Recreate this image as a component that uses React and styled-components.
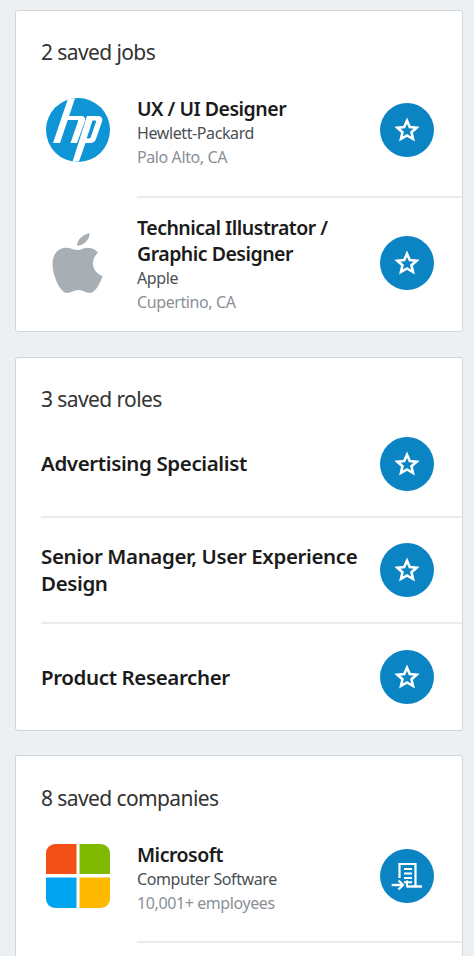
import styled, { createGlobalStyle } from "styled-components";

const GlobalStyle = createGlobalStyle`
  html, body {
    margin: 0;
    padding: 0;
    height: 956px;
    overflow: hidden;
    background: #edf0f3;
  }
  body {
    font-family: "Noto Sans", "Open Sans", sans-serif;
    -webkit-font-smoothing: antialiased;
  }
`;

const Page = styled.div`
  display: flex;
  flex-direction: column;
  height: 956px;
  box-sizing: border-box;
  padding: 10px 11px 0 15px;
`;

const Card = styled.section`
  background: #fff;
  border: 1px solid #d0d5d9;
  border-radius: 3px;
  box-sizing: border-box;
  padding-left: 25px;
  margin-bottom: ${(p) => p.$gap || 0}px;
`;

const OpenCard = styled(Card)`
  flex: 1;
  border-bottom: none;
  border-radius: 3px 3px 0 0;
`;

const Heading = styled.h2`
  margin: 0;
  height: ${(p) => p.$height}px;
  padding-top: ${(p) => p.$pad}px;
  box-sizing: border-box;
  font-size: 21px;
  line-height: 26px;
  font-weight: 400;
  letter-spacing: -0.6px;
  color: #333;
`;

const Row = styled.div`
  display: flex;
  align-items: center;
  height: ${(p) => p.$height}px;
  box-sizing: border-box;
  padding-right: 28px;
  padding-bottom: ${(p) => p.$lift || 0}px;
  border-bottom: ${(p) => (p.$last ? "none" : "2px solid #e9ebee")};
`;

const LogoRow = styled.div`
  display: flex;
  margin-left: 5px;
`;

const LogoSlot = styled.div`
  flex: 0 0 91px;
  display: flex;
  align-items: center;
  box-sizing: border-box;
  padding-bottom: ${(p) => p.$lift || 0}px;
  padding-left: ${(p) => p.$indent || 0}px;
`;

const RowBody = styled.div`
  flex: 1;
  min-width: 0;
`;

const Info = styled.div`
  flex: 1;
  min-width: 0;
  display: flex;
  flex-direction: column;
  padding-top: ${(p) => p.$drop || 0}px;
`;

const Title = styled.div`
  font-size: 19.5px;
  line-height: 26px;
  font-weight: 600;
  letter-spacing: -0.5px;
  color: #1b1b1b;
  margin-bottom: -1px;
`;

const RoleTitle = styled(Title)`
  font-size: 20.5px;
  line-height: 27px;
  letter-spacing: -0.38px;
  margin-bottom: 0;
`;

const Subtitle = styled.div`
  font-size: 16px;
  line-height: 24px;
  letter-spacing: -0.4px;
  color: #4a4f54;
`;

const Meta = styled(Subtitle)`
  color: #8a9096;
`;

const RoundButton = styled.button`
  flex: 0 0 54px;
  width: 54px;
  height: 54px;
  padding: 0;
  border: none;
  border-radius: 50%;
  background: #0b84c4;
  display: flex;
  align-items: center;
  justify-content: center;
`;

const StarIcon = () => (
  <svg width="26" height="26" viewBox="0 0 26 26" fill="none">
    <path
      d="M13 3.800l2.800 6.300 6.800.7-5.100 4.500 1.500 6.700-6-3.500-6 3.500 1.500-6.700-5.100-4.500 6.800-.7z"
      stroke="#fff"
      strokeWidth="2.600"
    />
  </svg>
);

const CompanyIcon = () => (
  <svg width="32" height="32" viewBox="0 0 32 32" fill="none" stroke="#fff">
    <path d="M8.500 18V4h16v22" strokeWidth="2.200" />
    <path d="M13 9h8M13 13.500h8M13 18h8M13 22.300h8" strokeWidth="2" />
    <path d="M15.500 26.500h15.500" strokeWidth="2.400" />
    <path d="M16 20.500v6" strokeWidth="2" />
    <path d="M.7 25h10.500" strokeWidth="2.400" />
    <path d="M7.500 20.500l4.500 4.500-4.500 4.500" strokeWidth="2.200" />
  </svg>
);

const HpLogo = () => (
  <svg width="64" height="64" viewBox="0 0 64 64">
    <circle cx="32" cy="32" r="32" fill="#0f95d6" />
    <g fill="#fff">
      <path d="M22 .8 29 .3 14 45H7z" />
      <path d="M19 18h16c3 0 5 2 4 5L31 45h-6.500L32 23.500c.4-1-.2-1.500-1-1.500H18z" />
      <path
        fillRule="evenodd"
        d="M41 18h11c3.500 0 5 2.500 4 5.500L50 41c-1 2.800-3 4-6 4h-4.500L33 63.600l-6.500.2zM46.500 22.500 40.700 40.500h2.100c1 0 1.600-.5 2-1.500L50 24c.3-.9-.2-1.500-1-1.500z"
      />
    </g>
  </svg>
);

const AppleLogo = () => (
  <svg width="52" height="60" viewBox="0 0 52 60">
    <path
      fill="#a7afb5"
      d="M25 13C25 7 30 2 37.500 0 38 6 33 12 25 13zM26 17C22 17 18 14.500 13.500 14.700 5.500 15 .5 22 .5 31 .5 42 8 60 15 60 19 60 22 57 26.500 57 31 57 33.500 60 38 60 43 60 48.500 50 50.500 43 45 41 41 36.500 41 30.500 41 25.500 43.500 22 46 19.500 43 16 39 14.700 35 14.700 32 14.700 29 17 26 17z"
    />
  </svg>
);

const WindowsLogo = () => (
  <svg width="64" height="64" viewBox="0 0 64 64">
    <path fill="#f25016" d="M9 0h21.500v30H0V9a9 9 0 0 1 9-9z" />
    <path fill="#7fba00" d="M33.500 0H55a9 9 0 0 1 9 9v21H33.500z" />
    <path fill="#00a4ef" d="M0 33.500h30.500V64H9a9 9 0 0 1-9-9z" />
    <path fill="#ffb900" d="M33.500 33.500H64V55a9 9 0 0 1-9 9H33.500z" />
  </svg>
);

const roles = [
  { name: "Advertising Specialist", height: 107 },
  { name: "Senior Manager, User Experience Design", height: 106 },
  { name: "Product Researcher", height: 106, last: true },
];

export default function App() {
  return (
    <>
      <GlobalStyle />
      <Page>
        <Card $gap={25}>
          <Heading $height={53} $pad={28}>2 saved jobs</Heading>
          <LogoRow>
            <LogoSlot $lift={2}>
              <HpLogo />
            </LogoSlot>
            <RowBody>
              <Row $height={134}>
                <Info $drop={4}>
                  <Title>UX / UI Designer</Title>
                  <Subtitle>Hewlett-Packard</Subtitle>
                  <Meta>Palo Alto, CA</Meta>
                </Info>
                <RoundButton aria-label="Save">
                  <StarIcon />
                </RoundButton>
              </Row>
            </RowBody>
          </LogoRow>
          <LogoRow>
            <LogoSlot $lift={3} $indent={6}>
              <AppleLogo />
            </LogoSlot>
            <RowBody>
              <Row $height={133} $last $lift={4}>
                <Info $drop={4}>
                  <Title>Technical Illustrator / Graphic Designer</Title>
                  <Subtitle>Apple</Subtitle>
                  <Meta>Cupertino, CA</Meta>
                </Info>
                <RoundButton aria-label="Save">
                  <StarIcon />
                </RoundButton>
              </Row>
            </RowBody>
          </LogoRow>
        </Card>
        <Card $gap={24}>
          <Heading $height={53} $pad={28}>3 saved roles</Heading>
          {roles.map((role) => (
            <Row key={role.name} $height={role.height} $last={role.last}>
              <Info>
                <RoleTitle>{role.name}</RoleTitle>
              </Info>
              <RoundButton aria-label="Save">
                <StarIcon />
              </RoundButton>
            </Row>
          ))}
        </Card>
        <OpenCard>
          <Heading $height={54} $pad={29}>8 saved companies</Heading>
          <LogoRow>
            <LogoSlot $lift={1}>
              <WindowsLogo />
            </LogoSlot>
            <RowBody>
              <Row $height={133}>
                <Info $drop={5}>
                  <Title>Microsoft</Title>
                  <Subtitle>Computer Software</Subtitle>
                  <Meta>10,001+ employees</Meta>
                </Info>
                <RoundButton aria-label="Follow">
                  <CompanyIcon />
                </RoundButton>
              </Row>
            </RowBody>
          </LogoRow>
        </OpenCard>
      </Page>
    </>
  );
}
